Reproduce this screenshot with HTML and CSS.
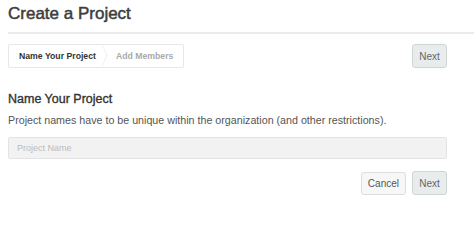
FILE: index.html
```html
<!DOCTYPE html>
<html lang="en">
<head>
  <meta charset="UTF-8" />
  <title>Create a Project</title>
  <link rel="stylesheet" href="styles.css">
</head>
<body>
  <h1 class="titulo">Create a Project</h1>

  <div class="barra">
    <div class="pasos">
      <div class="paso activo">Name Your Project</div>
      <div class="paso">Add Members</div>
    </div>
    <button class="boton siguiente">Next</button>
  </div>

  <div class="seccion">
    <h2>Name Your Project</h2>
    <p>Project names have to be unique within the organization (and other restrictions).</p>
    <input class="campo" type="text" placeholder="Project Name" />
  </div>

  <div class="acciones">
    <button class="boton">Cancel</button>
    <button class="boton siguiente">Next</button>
  </div>
</body>
</html>
```

FILE: styles.css
```css
body {
  font-family: "Liberation Sans", Arial, sans-serif;
  background: #fff;
  margin: 0;
  padding: 0 27px 0 8px;
  color: #333;
}
.titulo {
  font-size: 17px;
  font-weight: normal;
  -webkit-text-stroke: 0.5px #3d3d3d;
  color: #3d3d3d;
  margin: 0;
  padding: 4px 0 8px;
  border-bottom: 2px solid #ebebeb;
  margin-right: -27px;
  line-height: 20px;
}
.barra {
  display: flex;
  justify-content: space-between;
  align-items: center;
  margin-top: 10px;
}
.pasos {
  display: flex;
  border: 1px solid #e6e6e6;
  border-radius: 2px;
  height: 22px;
  background: #fff;
}
.paso {
  position: relative;
  font-size: 8.7px;
  font-weight: bold;
  color: #aaa;
  padding: 0 10px;
  line-height: 22px;
}
.paso.activo {
  color: #333;
  padding-right: 9px;
}
.paso.activo::after {
  content: "";
  position: absolute;
  right: -5px;
  top: 3px;
  width: 14px;
  height: 14px;
  border-top: 1px solid #e6e6e6;
  border-right: 1px solid #e6e6e6;
  transform: scaleX(0.45) rotate(45deg);
  background: #fff;
}
.paso + .paso {
  padding-left: 11px;
}
.boton {
  font-family: "Liberation Sans", Arial, sans-serif;
  font-size: 10px;
  color: #555;
  background: #f7f7f7;
  border: 1px solid #ddd;
  border-radius: 3px;
  height: 23px;
  padding: 0 6px;
}
.siguiente {
  background: #e8ecec;
  border-color: #cfd6d6;
  height: 24px;
  width: 35px;
  padding: 0;
  color: #666;
}
.seccion {
  margin-top: 23px;
}
.seccion h2 {
  font-size: 12.5px;
  font-weight: normal;
  -webkit-text-stroke: 0.35px #333;
  color: #333;
  margin: 0;
  line-height: 16px;
}
.seccion p {
  font-size: 10.7px;
  color: #555;
  margin: 6px 0 0;
  line-height: 14px;
}
.campo {
  display: block;
  box-sizing: border-box;
  width: 100%;
  height: 22px;
  margin-top: 10px;
  border: 1px solid #e3e3e3;
  border-radius: 2px;
  background: #f2f2f2;
  padding: 0 8px;
  font-family: "Liberation Sans", Arial, sans-serif;
  font-size: 9px;
}
.campo::placeholder {
  color: #bbb;
}
.acciones {
  display: flex;
  justify-content: flex-end;
  align-items: center;
  gap: 6px;
  margin-top: 12px;
}
```
